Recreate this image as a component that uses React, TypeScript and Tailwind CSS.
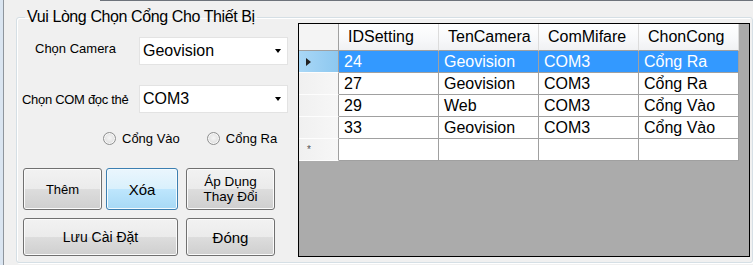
import { clsx } from "clsx";

type Row = { id: string; camera: string; com: string; gate: string };

const rows: Row[] = [
  { id: "24", camera: "Geovision", com: "COM3", gate: "Cổng Ra" },
  { id: "27", camera: "Geovision", com: "COM3", gate: "Cổng Ra" },
  { id: "29", camera: "Web", com: "COM3", gate: "Cổng Vào" },
  { id: "33", camera: "Geovision", com: "COM3", gate: "Cổng Vào" },
];

const columns = ["IDSetting", "TenCamera", "ComMifare", "ChonCong"];

function WinButton({
  children,
  className,
  hot,
}: {
  children: React.ReactNode;
  className?: string;
  hot?: boolean;
}) {
  return (
    <button
      className={clsx(
        "flex items-center justify-center rounded-[3px] border leading-[15px] text-black",
        hot
          ? "border-[#3c7fb1] bg-[linear-gradient(to_bottom,#eaf6fd_0%,#d9f0fc_50%,#bee6fd_50%,#a7d9f5_100%)] shadow-[inset_0_0_0_1px_#f4fbfe]"
          : "border-[#707070] bg-[linear-gradient(to_bottom,#f2f2f2_0%,#ebebeb_50%,#dddddd_50%,#cfcfcf_100%)] shadow-[inset_0_0_0_1px_#fbfbfb]",
        className
      )}
    >
      {children}
    </button>
  );
}

function Combo({ value }: { value: string }) {
  return (
    <div className="flex h-[28px] w-[149px] items-center justify-between border border-[#e3e3e3] bg-white pl-[3px] pr-[6px]">
      <span className="text-[16px] leading-[18px]">{value}</span>
      <span className="h-0 w-0 border-x-[3.5px] border-t-[4px] border-x-transparent border-t-black" />
    </div>
  );
}

function Radio({ label }: { label: string }) {
  return (
    <div className="flex items-center gap-[6px]">
      <span className="h-[13px] w-[13px] rounded-full border border-[#8e8f8f] bg-[radial-gradient(circle_at_50%_45%,#f6f6f6_0%,#d4d4d4_100%)] shadow-[inset_0_0_0_1px_#f8f8f8]" />
      <span className="text-[13px] leading-[15px]">{label}</span>
    </div>
  );
}

function Grid() {
  return (
    <div className="flex h-[234px] w-[452px] flex-col border border-black bg-[#ababab]">
      {/* header */}
      <div className="flex h-[27px]">
        <div className="w-[40px] border-b border-r border-[#a0a0a0] bg-[#f4f4f4]" />
        {columns.map((c) => (
          <div
            key={c}
            className="flex w-[100px] items-center border-b border-r border-b-[#a0a0a0] border-r-[#dcdcdc] bg-[linear-gradient(to_bottom,#ffffff_0%,#f7f8fa_60%,#f0f1f3_100%)] pl-[9px] text-[16px] leading-[18px]"
          >
            {c}
          </div>
        ))}
      </div>

      {rows.map((r, i) => {
        const sel = i === 0;
        return (
          <div key={r.id} className="flex h-[22px]">
            <div
              className={clsx(
                "flex w-[40px] items-center border-b border-r border-b-[#fdfdfd] border-r-[#a0a0a0] pl-[7px]",
                sel
                  ? "bg-[linear-gradient(to_right,#a9d7f6,#8dc8f0)]"
                  : "bg-[linear-gradient(to_right,#f0f0f0,#f7f7f7)]"
              )}
            >
              {sel && (
                <span className="h-0 w-0 border-y-[4.5px] border-l-[5px] border-y-transparent border-l-[#222]" />
              )}
            </div>
            {[r.id, r.camera, r.com, r.gate].map((v, j) => (
              <div
                key={j}
                className={clsx(
                  "flex w-[100px] items-center border-b border-r border-[#a0a0a0] pl-[5px] text-[16px] leading-[18px]",
                  sel ? "bg-[#3399ff] text-white" : "bg-white text-black"
                )}
              >
                {v}
              </div>
            ))}
          </div>
        );
      })}

      {/* new row */}
      <div className="flex h-[22px]">
        <div className="flex w-[40px] items-center border-b border-r border-b-[#fdfdfd] border-r-[#a0a0a0] bg-[linear-gradient(to_right,#f0f0f0,#f7f7f7)] pl-[8px]">
          <span className="text-[10px] leading-[10px] text-[#555]">*</span>
        </div>
        {columns.map((c) => (
          <div key={c} className="w-[100px] border-b border-r border-[#a0a0a0] bg-white" />
        ))}
      </div>
    </div>
  );
}

export default function App() {
  return (
    <div className="relative flex h-[265px] w-[753px] overflow-hidden bg-[#f0f0f0] font-['Liberation_Sans',Arial,sans-serif] text-black">
      {/* window edge */}
      <div className="w-[3px] bg-[#dae5f1]" />
      <div className="w-px bg-[#8e959d]" />
      <div className="absolute left-[100px] right-0 top-0 h-px bg-[#6d737b]" />

      <div className="pl-[12px] pt-[8px]">
        <fieldset className="h-[255px] w-[737px] rounded-[3px] border border-[#d5dfe5] shadow-[inset_1px_1px_0_#ffffff,1px_1px_0_#ffffff]">
          <legend className="ml-[8px] px-[2px] text-[16px] leading-[18px] tracking-[-0.4px]">
            Vui Lòng Chọn Cổng Cho Thiết Bị
          </legend>

          <div className="-mt-[3px] flex">
            {/* left panel */}
            <div className="w-[281px]">
              <div className="mt-[14px] flex h-[28px] items-start">
                <span className="w-[122px] pl-[18px] pt-[4px] text-[13px] leading-[15px]">Chọn Camera</span>
                <Combo value="Geovision" />
              </div>
              <div className="mt-[20px] flex h-[28px] items-center">
                <span className="w-[122px] pl-[5px] text-[13px] leading-[15px] tracking-[-0.3px]">
                  Chọn COM đọc thẻ
                </span>
                <Combo value="COM3" />
              </div>

              <div className="ml-[86px] mt-[17px] flex h-[16px] items-center gap-[27px]">
                <Radio label="Cổng Vào" />
                <Radio label="Cổng Ra" />
              </div>

              <div className="ml-[6px] mt-[22px] flex">
                <WinButton className="h-[42px] w-[79px] text-[13px]">Thêm</WinButton>
                <WinButton hot className="ml-[4px] h-[42px] w-[72px] text-[15px]">
                  Xóa
                </WinButton>
                <WinButton className="ml-[8px] h-[42px] w-[89px] text-center text-[13.5px]">
                  Áp Dụng
                  <br />
                  Thay Đổi
                </WinButton>
              </div>
              <div className="ml-[6px] mt-[8px] flex">
                <WinButton className="h-[38px] w-[155px] text-[14px]">Lưu Cài Đặt</WinButton>
                <WinButton className="ml-[8px] h-[38px] w-[89px] text-[15px]">Đóng</WinButton>
              </div>
            </div>

            <Grid />
          </div>
        </fieldset>
      </div>
    </div>
  );
}
